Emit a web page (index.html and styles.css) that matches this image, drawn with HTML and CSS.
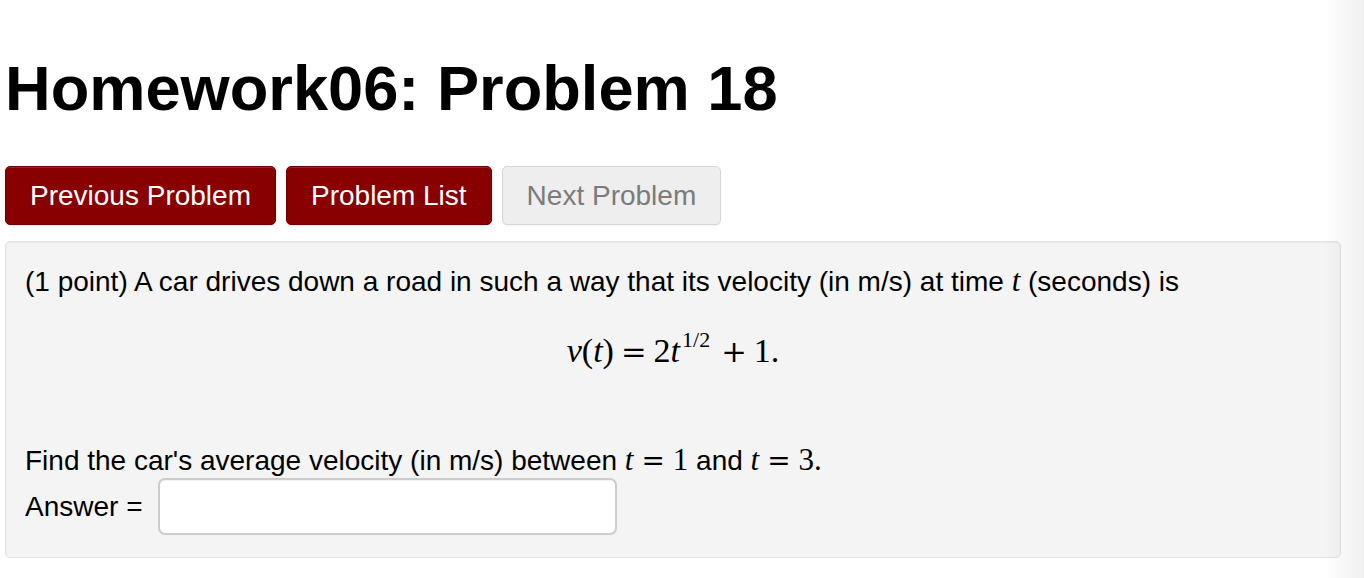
FILE: index.html
```html
<!DOCTYPE html>
<html lang="en">
<head>
  <meta charset="UTF-8" />
  <meta name="viewport" content="width=device-width, initial-scale=1" />
  <title>Homework06: Problem 18</title>

  <link rel="stylesheet" href="styles.css">
</head>
<body>
  <div class="edge-shade"></div>

  <main class="page">
    <h1 class="page-title">Homework06: Problem 18</h1>

    <nav class="problem-nav">
      <a class="btn btn-primary" href="#">Previous Problem</a>
      <a class="btn btn-primary" href="#">Problem List</a>
      <span class="btn btn-disabled">Next Problem</span>
    </nav>

    <!-- problem body -->
    <section class="well">
      <p class="prompt">(1 point) A car drives down a road in such a way that its velocity (in m/s) at time <span class="mi">t</span> (seconds) is</p>

      <div class="display-math"><span class="mi">v</span><span class="mn">(</span><span class="mi">t</span><span class="mn">)</span><span class="mo">=</span><span class="mn">2</span><span class="mi">t</span><sup class="msup">1/2</sup><span class="mo mo-plus">+</span><span class="mn">1.</span></div>

      <p class="question">Find the car's average velocity (in m/s) between <span class="inline-math"><span class="mi">t</span><span class="mo">=</span><span class="mn">1</span></span> and <span class="inline-math"><span class="mi">t</span><span class="mo">=</span><span class="mn">3.</span></span></p>

      <div class="answer-row">
        <label for="ans">Answer =</label>
        <input id="ans" class="answer-input" type="text" />
      </div>
    </section>
  </main>
</body>
</html>
```

FILE: styles.css
```css
*, *::before, *::after {
  box-sizing: border-box;
}

body {
  margin: 0;
  padding: 0;
  background: #fff;
  color: #000;
  font-family: "Liberation Sans", Arial, sans-serif;
}

.page {
  margin: 0 23px 0 5px;
}

/* light shadow down the right edge of the window */
.edge-shade {
  position: fixed;
  top: 0;
  right: 0;
  width: 40px;
  height: 100%;
  background: linear-gradient(90deg, rgba(0,0,0,0), rgba(0,0,0,0.06));
  pointer-events: none;
  z-index: 5;
}

.page-title {
  margin: 54px 0 44px;
  font-size: 63.2px;
  line-height: 68px;
  font-weight: 700;
}

.problem-nav {
  display: flex;
  gap: 10px;
  margin-bottom: 16px;
}

.btn {
  display: inline-block;
  padding: 10px 24px;
  font-size: 28px;
  line-height: 37px;
  border: 1px solid;
  border-radius: 5px;
  text-decoration: none;
}

.btn-primary {
  background: #880000;
  border-color: #6e0000;
  color: #fff;
  box-shadow: inset 0 1px 0 rgba(255,255,255,0.15), 0 1px 2px rgba(0,0,0,0.1);
}

.btn-disabled {
  background: #eeeeee;
  border-color: #d6d6d6;
  color: #7b7b7b;
  box-shadow: 0 1px 2px rgba(0,0,0,0.05);
}

.well {
  background: #f4f4f4;
  border: 1px solid #e2e2e2;
  border-radius: 5px;
  padding: 22px 19px 22px;
  box-shadow: inset 0 1px 2px rgba(0,0,0,0.04);
  font-size: 28px;
  line-height: 34px;
}

.well p {
  margin: 0;
}

.mi,
.mn,
.msup {
  font-family: "Liberation Serif", "Times New Roman", serif;
}

.mo {
  font-family: "DejaVu Serif", serif;
  font-size: 0.9em;
}

.mi {
  font-style: italic;
}

.prompt .mi {
  font-size: 31px;
}

.display-math {
  text-align: center;
  font-size: 34px;
  line-height: 40px;
  margin: 30px 0 71px;
}

.display-math .mo {
  margin: 0 7px;
}

.display-math .mo-plus {
  margin: 0 7px 0 11px;
}

.msup {
  font-size: 22px;
  line-height: 1;
  vertical-align: 15px;
  margin-left: 2px;
}

.inline-math {
  font-size: 31px;
}

.inline-math .mo {
  margin: 0 8px;
}

.question {
  margin-bottom: 4px;
}

.answer-row {
  display: flex;
  align-items: center;
  gap: 15px;
}

.answer-input {
  width: 459px;
  height: 57px;
  border: 2px solid #cccccc;
  border-radius: 7px;
  background: #fff;
  box-shadow: inset 0 1px 1px rgba(0,0,0,0.06);
  font-size: 24px;
  padding: 4px 10px;
}
```
